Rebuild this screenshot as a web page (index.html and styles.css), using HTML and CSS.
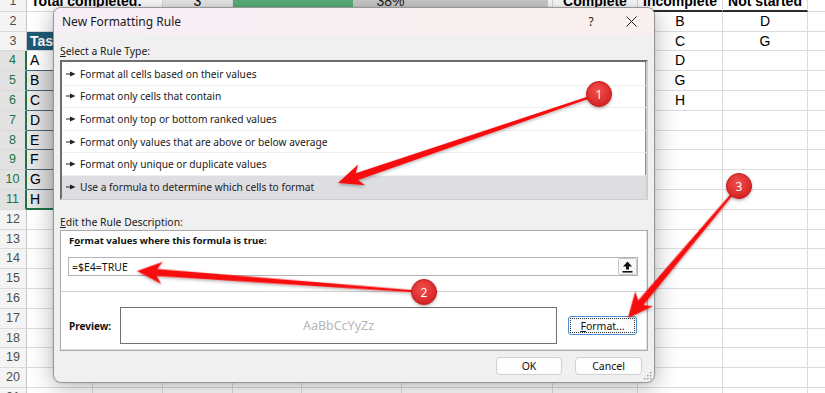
FILE: index.html
```html
<!DOCTYPE html>
<html lang="en">
<head>
<meta charset="utf-8">
<title>New Formatting Rule</title>
<link rel="stylesheet" href="styles.css">
</head>
<body>
<div class="sheet">
  <div class="row">
    <div class="hdr">1</div>
    <div class="c cab bold left">Total completed:</div>
    <div class="c cc tint">3</div>
    <div class="c cdef"><div class="bar"><div class="fill" style="width:38%"></div><span class="pct">38%</span></div></div>
    <div class="c cg bold th">Complete</div>
    <div class="c ch bold th">Incomplete</div>
    <div class="c ci bold th">Not started</div>
    <div class="c cj"></div>
  </div>
  <div class="row">
    <div class="hdr">2</div><div class="c ca"></div><div class="c cb"></div><div class="c cc"></div><div class="c cd"></div><div class="c ce"></div><div class="c cf"></div><div class="c cg"></div><div class="c ch">B</div><div class="c ci">D</div><div class="c cj"></div>
  </div>
  <div class="row">
    <div class="hdr">3</div><div class="c ca thead">Task</div><div class="c cb"></div><div class="c cc"></div><div class="c cd"></div><div class="c ce"></div><div class="c cf"></div><div class="c cg"></div><div class="c ch">C</div><div class="c ci">G</div><div class="c cj"></div>
  </div>
  <div class="row">
    <div class="hdr sel">4</div><div class="c ca task first">A</div><div class="c cb"></div><div class="c cc"></div><div class="c cd"></div><div class="c ce"></div><div class="c cf"></div><div class="c cg"></div><div class="c ch">D</div><div class="c ci"></div><div class="c cj"></div>
  </div>
  <div class="row">
    <div class="hdr sel">5</div><div class="c ca task done">B</div><div class="c cb"></div><div class="c cc"></div><div class="c cd"></div><div class="c ce"></div><div class="c cf"></div><div class="c cg"></div><div class="c ch">G</div><div class="c ci"></div><div class="c cj"></div>
  </div>
  <div class="row">
    <div class="hdr sel">6</div><div class="c ca task done">C</div><div class="c cb"></div><div class="c cc"></div><div class="c cd"></div><div class="c ce"></div><div class="c cf"></div><div class="c cg"></div><div class="c ch">H</div><div class="c ci"></div><div class="c cj"></div>
  </div>
  <div class="row">
    <div class="hdr sel">7</div><div class="c ca task done">D</div><div class="c cb"></div><div class="c cc"></div><div class="c cd"></div><div class="c ce"></div><div class="c cf"></div><div class="c cg"></div><div class="c ch"></div><div class="c ci"></div><div class="c cj"></div>
  </div>
  <div class="row">
    <div class="hdr sel">8</div><div class="c ca task done">E</div><div class="c cb"></div><div class="c cc"></div><div class="c cd"></div><div class="c ce"></div><div class="c cf"></div><div class="c cg"></div><div class="c ch"></div><div class="c ci"></div><div class="c cj"></div>
  </div>
  <div class="row">
    <div class="hdr sel">9</div><div class="c ca task done">F</div><div class="c cb"></div><div class="c cc"></div><div class="c cd"></div><div class="c ce"></div><div class="c cf"></div><div class="c cg"></div><div class="c ch"></div><div class="c ci"></div><div class="c cj"></div>
  </div>
  <div class="row">
    <div class="hdr sel">10</div><div class="c ca task done">G</div><div class="c cb"></div><div class="c cc"></div><div class="c cd"></div><div class="c ce"></div><div class="c cf"></div><div class="c cg"></div><div class="c ch"></div><div class="c ci"></div><div class="c cj"></div>
  </div>
  <div class="row">
    <div class="hdr sel">11</div><div class="c ca task done last">H</div><div class="c cb"></div><div class="c cc"></div><div class="c cd"></div><div class="c ce"></div><div class="c cf"></div><div class="c cg"></div><div class="c ch"></div><div class="c ci"></div><div class="c cj"></div>
  </div>
  <div class="row">
    <div class="hdr">12</div><div class="c ca"></div><div class="c cb"></div><div class="c cc"></div><div class="c cd"></div><div class="c ce"></div><div class="c cf"></div><div class="c cg"></div><div class="c ch"></div><div class="c ci"></div><div class="c cj"></div>
  </div>
  <div class="row">
    <div class="hdr">13</div><div class="c ca"></div><div class="c cb"></div><div class="c cc"></div><div class="c cd"></div><div class="c ce"></div><div class="c cf"></div><div class="c cg"></div><div class="c ch"></div><div class="c ci"></div><div class="c cj"></div>
  </div>
  <div class="row">
    <div class="hdr">14</div><div class="c ca"></div><div class="c cb"></div><div class="c cc"></div><div class="c cd"></div><div class="c ce"></div><div class="c cf"></div><div class="c cg"></div><div class="c ch"></div><div class="c ci"></div><div class="c cj"></div>
  </div>
  <div class="row">
    <div class="hdr">15</div><div class="c ca"></div><div class="c cb"></div><div class="c cc"></div><div class="c cd"></div><div class="c ce"></div><div class="c cf"></div><div class="c cg"></div><div class="c ch"></div><div class="c ci"></div><div class="c cj"></div>
  </div>
  <div class="row">
    <div class="hdr">16</div><div class="c ca"></div><div class="c cb"></div><div class="c cc"></div><div class="c cd"></div><div class="c ce"></div><div class="c cf"></div><div class="c cg"></div><div class="c ch"></div><div class="c ci"></div><div class="c cj"></div>
  </div>
  <div class="row">
    <div class="hdr">17</div><div class="c ca"></div><div class="c cb"></div><div class="c cc"></div><div class="c cd"></div><div class="c ce"></div><div class="c cf"></div><div class="c cg"></div><div class="c ch"></div><div class="c ci"></div><div class="c cj"></div>
  </div>
  <div class="row">
    <div class="hdr">18</div><div class="c ca"></div><div class="c cb"></div><div class="c cc"></div><div class="c cd"></div><div class="c ce"></div><div class="c cf"></div><div class="c cg"></div><div class="c ch"></div><div class="c ci"></div><div class="c cj"></div>
  </div>
  <div class="row">
    <div class="hdr">19</div><div class="c ca"></div><div class="c cb"></div><div class="c cc"></div><div class="c cd"></div><div class="c ce"></div><div class="c cf"></div><div class="c cg"></div><div class="c ch"></div><div class="c ci"></div><div class="c cj"></div>
  </div>
  <div class="row">
    <div class="hdr">20</div><div class="c ca"></div><div class="c cb"></div><div class="c cc"></div><div class="c cd"></div><div class="c ce"></div><div class="c cf"></div><div class="c cg"></div><div class="c ch"></div><div class="c ci"></div><div class="c cj"></div>
  </div>
  <div class="row">
    <div class="hdr">21</div><div class="c ca"></div><div class="c cb"></div><div class="c cc"></div><div class="c cd"></div><div class="c ce"></div><div class="c cf"></div><div class="c cg"></div><div class="c ch"></div><div class="c ci"></div><div class="c cj"></div>
  </div>
</div>

<div class="dialog">
  <div class="titlebar">
    <span class="title">New Formatting Rule</span>
    <span class="help">?</span>
    <span class="close"><svg width="11" height="11" viewBox="0 0 11 11"><path d="M0.5 0.5 L10.5 10.5 M10.5 0.5 L0.5 10.5" stroke="#222" stroke-width="1"/></svg></span>
  </div>
  <div class="dbody">
    <div class="lbl1"><u>S</u>elect a Rule Type:</div>
    <div class="listbox">
      <div class="item"><svg class="tri" width="10" height="6" viewBox="0 0 10 6"><path d="M0 3 H5" stroke="#222" stroke-width="1.2"/><path d="M4 0.6 L9.5 3 L4 5.4Z" fill="#222"/></svg>Format all cells based on their values</div>
      <div class="item"><svg class="tri" width="10" height="6" viewBox="0 0 10 6"><path d="M0 3 H5" stroke="#222" stroke-width="1.2"/><path d="M4 0.6 L9.5 3 L4 5.4Z" fill="#222"/></svg>Format only cells that contain</div>
      <div class="item"><svg class="tri" width="10" height="6" viewBox="0 0 10 6"><path d="M0 3 H5" stroke="#222" stroke-width="1.2"/><path d="M4 0.6 L9.5 3 L4 5.4Z" fill="#222"/></svg>Format only top or bottom ranked values</div>
      <div class="item"><svg class="tri" width="10" height="6" viewBox="0 0 10 6"><path d="M0 3 H5" stroke="#222" stroke-width="1.2"/><path d="M4 0.6 L9.5 3 L4 5.4Z" fill="#222"/></svg>Format only values that are above or below average</div>
      <div class="item"><svg class="tri" width="10" height="6" viewBox="0 0 10 6"><path d="M0 3 H5" stroke="#222" stroke-width="1.2"/><path d="M4 0.6 L9.5 3 L4 5.4Z" fill="#222"/></svg>Format only unique or duplicate values</div>
      <div class="item selected"><svg class="tri" width="10" height="6" viewBox="0 0 10 6"><path d="M0 3 H5" stroke="#222" stroke-width="1.2"/><path d="M4 0.6 L9.5 3 L4 5.4Z" fill="#222"/></svg>Use a formula to determine which cells to format</div>
    </div>
    <div class="lbl2"><u>E</u>dit the Rule Description:</div>
    <div class="panel">
      <div class="ptitle">F<u>o</u>rmat values where this formula is true:</div>
      <div class="formula">
        <span class="ftext">=$E4=TRUE</span>
        <span class="upbtn"><svg width="11" height="12" viewBox="0 0 11 12"><path d="M5.5 0.5 L10 5.5 H7 V8.5 H4 V5.5 H1Z" fill="#111"/><rect x="0.5" y="10" width="10" height="1.6" fill="#111"/></svg></span>
      </div>
      <div class="sep"></div>
      <div class="prow">
        <span class="plabel">Preview:</span>
        <div class="pbox">AaBbCcYyZz</div>
        <div class="fmtbtn"><span class="focus"><u>F</u>ormat...</span></div>
      </div>
    </div>
    <div class="footer">
      <div class="btn ok">OK</div>
      <div class="btn cancel">Cancel</div>
    </div>
  </div>
  <svg class="grip" width="8" height="8" viewBox="0 0 8 8"><g fill="#9a9a9a"><rect x="6" y="0" width="1.4" height="1.4"/><rect x="3" y="3" width="1.4" height="1.4"/><rect x="6" y="3" width="1.4" height="1.4"/><rect x="0" y="6" width="1.4" height="1.4"/><rect x="3" y="6" width="1.4" height="1.4"/><rect x="6" y="6" width="1.4" height="1.4"/></g></svg>
</div>

<svg class="overlay" width="825" height="393" viewBox="0 0 825 393">
  <defs>
    <radialGradient id="cgrad" cx="0.45" cy="0.38" r="0.62">
      <stop offset="0" stop-color="#f45050"/>
      <stop offset="1" stop-color="#d42222"/>
    </radialGradient>
    <filter id="sh" x="-30%" y="-30%" width="160%" height="160%">
      <feDropShadow dx="0" dy="1.5" stdDeviation="1.6" flood-color="#000" flood-opacity="0.3"/>
    </filter>
  </defs>
  <g fill="#f70d0d" filter="url(#sh)">
    <path transform="translate(599 94) rotate(161.17)" d="M0,-1.1 L255.8,-3.6 L250.8,-11 L275.8,0 L250.8,11 L255.8,3.6 L0,1.1Z"/>
    <path transform="translate(424 292) rotate(184.18)" d="M0,-1.1 L267.8,-3.6 L262.8,-11 L287.8,0 L262.8,11 L267.8,3.6 L0,1.1Z"/>
    <path transform="translate(739 186) rotate(130.06)" d="M0,-1.1 L152.5,-3.4 L147.5,-11.5 L172.5,0 L147.5,11.5 L152.5,3.4 L0,1.1Z"/>
  </g>
  <g filter="url(#sh)" fill="url(#cgrad)" stroke="#c01b1b" stroke-width="1">
    <circle cx="599" cy="94" r="12.5"/>
    <circle cx="424" cy="292" r="12.5"/>
    <circle cx="739" cy="186" r="12.5"/>
  </g>
  <g class="num" fill="#fff">
    <text x="599" y="98.5">1</text>
    <text x="424" y="296.5">2</text>
    <text x="739" y="190.5">3</text>
  </g>
</svg>
</body>
</html>
```

FILE: styles.css
```css
* { box-sizing: border-box; margin: 0; padding: 0; }
html, body { width: 825px; height: 393px; overflow: hidden; background: #fff; }
body { position: relative; font-family: "Liberation Sans", Arial, sans-serif; }

/* ---------- spreadsheet ---------- */
.sheet { margin-top: -8px; }
.row { display: flex; height: 19.8px; }
.hdr {
  width: 27px; flex: none;
  background: #f4f4f4;
  border-right: 1px solid #c6c6c6;
  border-bottom: 1px solid #dadada;
  color: #4d4d4d; font-size: 12.5px; line-height: 19px; text-align: center;
}
.hdr.sel { background: #e2e2e2; color: #217346; border-right: 2px solid #217346; }
.c {
  flex: none;
  border-right: 1px solid #dcdcdc;
  border-bottom: 1px solid #dcdcdc;
  font-size: 14px; line-height: 18.8px; color: #000;
  text-align: center; white-space: nowrap; overflow: visible;
}
.ca { width: 66px; } .cb { width: 70px; } .cc { width: 70px; } .cd { width: 69px; }
.ce { width: 100px; } .cf { width: 151px; } .cg { width: 85px; } .ch { width: 85px; }
.ci { width: 85px; } .cj { width: 17px; border-right: none; }
.cab { width: 136px; } .cdef { width: 320px; padding-right: 4px; }
.bold { font-weight: bold; }
.left { text-align: left; padding-left: 4px; }
.tint { background: #ececec; }
.th { border-bottom: 2px solid #2b2b2b; }
.bar { position: relative; height: 17px; margin-top: 1px; background: #cdcdcd; border-bottom: 1px solid #b5b5b5; }
.fill { height: 100%; background: #5ab27c; }
.pct { position: absolute; left: 0; right: 0; top: -1px; text-align: center; font-size: 14px; color: #222; }
.thead { background: #1f5a77; color: #fff; font-weight: bold; text-align: left; padding-left: 3px; }
.task { text-align: left; padding-left: 3px; border-bottom: 1px solid #47657a; }
.done { background: linear-gradient(90deg, #ececec 0%, #c9c9c9 60%, #b0b0b0 100%); }
.last { border-bottom: 2px solid #217346; }

/* ---------- dialog ---------- */
.dialog {
  position: absolute; left: 53px; top: 7px; width: 602px; height: 376px;
  border: 1px solid #979797; border-radius: 8px; overflow: hidden;
  background: #f0f0f0;
  box-shadow: 0 4px 24px rgba(0,0,0,0.3), 0 0 2px rgba(0,0,0,0.15);
  font-family: "Noto Sans", "Open Sans", sans-serif; color: #1a1a1a;
}
.titlebar {
  height: 26px; display: flex; align-items: center;
  background: linear-gradient(90deg, #f7eff7 0%, #f8f0f1 60%, #f9f0ee 100%);
  padding-left: 8px;
}
.title { font-size: 12px; flex: 1; color: #1a1a1a; }
.help { width: 34px; text-align: center; font-size: 12px; color: #222; }
.close { width: 46px; display: flex; justify-content: center; align-items: center; }
.dbody { padding: 0 6px; font-size: 10.4px; }
.lbl1 { height: 26px; padding-top: 10px; line-height: 14px; }
.listbox {
  height: 140px; background: #fff;
  border: 2px solid; border-color: #6e6e6e #cfcfcf #cfcfcf #6e6e6e;
  box-shadow: inset -1px -1px 0 #8a8a8a;
  padding-top: 1px;
}
.item {
  height: 22.6px; display: flex; align-items: center;
  padding-left: 4px; border-bottom: 1px solid #efefef;
  font-size: 10.2px; color: #1a1a1a; white-space: nowrap;
}
.item:last-child { border-bottom: none; }
.item.selected { background: #dedee2; }
.tri { margin-right: 4px; flex: none; }
.lbl2 { height: 30px; padding-top: 15px; line-height: 14px; }
.panel {
  height: 121px; background: #fff;
  border: 1px solid #a9a9a9; box-shadow: inset -1px -1px 0 #e2e2e2;
}
.ptitle { height: 26px; padding: 3px 0 0 8px; line-height: 13px; font-weight: bold; font-size: 9.6px; color: #111; }
.formula {
  margin: 0 9px 0 7px; height: 19px; border: 1px solid #b4b4b4;
  display: flex; align-items: center; justify-content: space-between;
}
.ftext { padding-left: 3px; font-size: 10.5px; color: #111; }
.upbtn {
  width: 19px; height: 17px; border: 1px solid #c8c8c8; border-radius: 2px;
  background: #f9f9f9; display: flex; align-items: center; justify-content: center;
}
.sep { margin-top: 15px; border-top: 1px solid #d2d2d2; }
.prow { display: flex; align-items: center; padding-top: 15px; }
.plabel { width: 59px; padding-left: 8px; font-weight: bold; font-size: 10px; color: #111; }
.pbox {
  width: 437px; height: 37px; border: 1px solid #707070;
  display: flex; align-items: center; justify-content: center;
  color: #b6b6b6; font-size: 12.5px;
}
.fmtbtn {
  margin-left: 11px; width: 69px; height: 19px;
  border: 1px solid #4c8fd6; border-radius: 3px; background: #fdfdfd;
  padding: 1px;
}
.focus {
  display: flex; height: 100%; align-items: center; justify-content: center;
  border: 1px dotted #333; font-size: 10.5px; color: #111;
}
.footer { display: flex; justify-content: flex-end; gap: 13px; padding: 6px 6px 0 0; }
.btn {
  height: 18px; border: 1px solid #d0d0d0; border-radius: 4px; background: #fdfdfd;
  display: flex; align-items: center; justify-content: center;
  font-size: 10.5px; color: #111;
}
.ok { width: 66px; }
.cancel { width: 67px; }
.grip { position: absolute; right: 2px; bottom: 2px; }

/* ---------- annotations ---------- */
.overlay { position: absolute; left: 0; top: 0; pointer-events: none; }
.num text { font-family: "Noto Sans", sans-serif; font-size: 12px; text-anchor: middle; }
```
